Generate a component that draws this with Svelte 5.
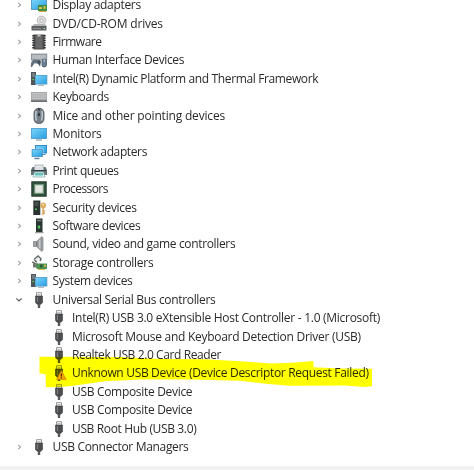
<script>
  const devices = [
    { icon: "display", label: "Display adapters", spacing: -0.31 },
    { icon: "disc", label: "DVD/CD-ROM drives", spacing: -0.18 },
    { icon: "firmware", label: "Firmware", spacing: -0.48 },
    { icon: "hid", label: "Human Interface Devices", spacing: -0.37 },
    { icon: "system", label: "Intel(R) Dynamic Platform and Thermal Framework", spacing: -0.37 },
    { icon: "keyboard", label: "Keyboards", spacing: -0.33 },
    { icon: "mouse", label: "Mice and other pointing devices", spacing: -0.18 },
    { icon: "monitor", label: "Monitors", spacing: -0.17 },
    { icon: "network", label: "Network adapters", spacing: -0.38 },
    { icon: "printer", label: "Print queues", spacing: -0.42 },
    { icon: "cpu", label: "Processors", spacing: -0.58 },
    { icon: "security", label: "Security devices", spacing: -0.31 },
    { icon: "software", label: "Software devices", spacing: -0.4 },
    { icon: "sound", label: "Sound, video and game controllers", spacing: -0.35 },
    { icon: "storage", label: "Storage controllers", spacing: -0.28 },
    { icon: "system", label: "System devices", spacing: -0.35 },
    { icon: "usb", label: "Universal Serial Bus controllers", open: true, spacing: -0.33 },
    { icon: "usb", label: "Intel(R) USB 3.0 eXtensible Host Controller - 1.0 (Microsoft)", child: true, spacing: -0.28 },
    { icon: "usb", label: "Microsoft Mouse and Keyboard Detection Driver (USB)", child: true, spacing: -0.28 },
    { icon: "usb", label: "Realtek USB 2.0 Card Reader", child: true, spacing: -0.4 },
    { icon: "usb", label: "Unknown USB Device (Device Descriptor Request Failed)", child: true, warning: true, spacing: -0.32 },
    { icon: "usb", label: "USB Composite Device", child: true, spacing: -0.31 },
    { icon: "usb", label: "USB Composite Device", child: true, spacing: -0.31 },
    { icon: "usb", label: "USB Root Hub (USB 3.0)", child: true, spacing: -0.36 },
    { icon: "usb", label: "USB Connector Managers", spacing: -0.32 },
  ];
</script>

<div class="window">
  <svg class="defs" width="0" height="0">
    <defs>
      <linearGradient id="screen" x1="0" y1="0" x2="1" y2="1">
        <stop offset="0" stop-color="#78d4fb" />
        <stop offset="1" stop-color="#2b9fe0" />
      </linearGradient>
    </defs>
  </svg>

  <div class="tree">
    {#each devices as { icon, label, child, open, warning, spacing }}
      <div class="row" class:child>
        <span class="toggle">
          {#if open}
            <svg width="8" height="8" viewBox="0 0 8 8"><path d="M1.4 2.5 4 5l2.6-2.5" fill="none" stroke="#606060" stroke-width="1.1" /></svg>
          {:else if !child}
            <svg width="8" height="8" viewBox="0 0 8 8"><path d="M3.2 1.8 5.6 4 3.2 6.2" fill="none" stroke="#a2a2a2" stroke-width="1.1" /></svg>
          {/if}
        </span>
        <svg class="icon" width="18" height="18" viewBox="0 0 18 18">
          {#if icon === "display"}
            <rect x="1" y="3" width="16" height="11" fill="#5b9dc8" />
            <rect x="2" y="4" width="14" height="9" fill="url(#screen)" />
            <rect x="8" y="9" width="9" height="6" fill="#3c8f3f" />
            <path d="M9 11h3v2H9zM13.5 10h2v3h-2z" fill="#d9bc53" />
            <path d="M9 15.4h7" stroke="#c99d39" />
          {:else if icon === "disc"}
            <circle cx="11.5" cy="5.5" r="4.4" fill="#dcdcdc" stroke="#b3b5b4" stroke-width=".8" />
            <circle cx="11.5" cy="5.5" r="1.5" fill="#fff" stroke="#999" stroke-width=".7" />
            <path d="M4 9h11l2 2.5H1.5z" fill="#b5b5b5" />
            <rect x="1.5" y="11" width="15" height="4.5" rx=".5" fill="#5d5f60" />
            <path d="M3 13.5h8" stroke="#989b9b" stroke-width=".8" />
            <path d="M13.5 13.5h1.5" stroke="#b5ecb0" />
          {:else if icon === "firmware"}
            <rect x="3.5" y="1.5" width="11" height="15" fill="#4a4a4a" />
            <path d="M3.2 2v14M14.8 2v14" stroke="#292929" stroke-width="1.8" stroke-dasharray="1.4 1" />
            <rect x="5.5" y="2.5" width="7" height="13" fill="#68696a" />
            <path d="M7.5 1.5h3v2h-3z" fill="#c4c4c4" />
          {:else if icon === "hid"}
            <rect x="1.3" y="3" width="15.5" height="6" fill="#a8afb4" stroke="#737c84" stroke-width=".7" />
            <path d="M2.5 5h13M2.5 7h13" stroke="#e2e5e7" stroke-width=".7" stroke-dasharray="1.3 .7" />
            <path d="M2.5 9.5Q5 7.5 8 9.5l1 4-2-1-2.5-.2L2 16H.8L1 12z" fill="#64717c" />
            <path d="M7 9.5q3-1.5 4 1l-1 5-2-3z" fill="#40515e" />
            <rect x="12" y="8" width="4.5" height="8" rx="2.2" fill="#6b7f93" stroke="#405163" stroke-width=".8" />
            <path d="M14.2 8v3" stroke="#dfe8ed" stroke-width=".7" />
          {:else if icon === "system"}
            <rect x="1" y="2" width="5" height="13" fill="#4b555b" />
            <path d="M2 4h3M2 6h3" stroke="#aeb9bd" stroke-width=".8" />
            <circle cx="3.2" cy="9.5" r=".8" fill="#6ede62" />
            <rect x="5" y="5" width="12.3" height="9.5" fill="#5b9dc8" />
            <rect x="5.8" y="5.8" width="10.7" height="7.9" fill="url(#screen)" />
            <path d="M8 15.2h6" stroke="#8ba0af" stroke-width="1" />
          {:else if icon === "keyboard"}
            <rect x="1" y="4" width="16" height="10" fill="#a6a8aa" />
            <path d="M2 5.8h14M2 8h14M2 10.2h14" stroke="#dadcdd" stroke-width="1" stroke-dasharray="1.4 .4" />
            <path d="M1 13.2h16" stroke="#6b6e71" stroke-width="1.6" />
          {:else if icon === "mouse"}
            <rect x="4" y="1.3" width="10" height="15.2" rx="4.6" fill="#767f88" stroke="#4a5158" stroke-width=".8" />
            <path d="M6 4q-1 5 .4 9.5M12 4q1 5-.4 9.5" fill="none" stroke="#c0c8ce" stroke-width="1.5" />
            <path d="M9 1.5V9" stroke="#252c33" stroke-width="1.7" />
            <path d="M9 3.2v3" stroke="#ccd1d4" stroke-width=".8" />
          {:else if icon === "monitor"}
            <rect x="1" y="3" width="16" height="11" fill="#5b9dc8" />
            <rect x="1.8" y="3.8" width="14.4" height="9.4" fill="url(#screen)" />
            <path d="M6 15h6" stroke="#8ba0af" stroke-width="1.2" />
          {:else if icon === "network"}
            <rect x="5" y="2" width="12" height="8.5" fill="#287ebd" />
            <rect x="5.8" y="2.8" width="10.4" height="6.9" fill="url(#screen)" />
            <path d="M12.5 11.5h3" stroke="#61869d" />
            <rect x="1.5" y="6" width="11.5" height="8" fill="#287ebd" stroke="#e8f5fb" stroke-width=".5" />
            <rect x="2.4" y="6.9" width="9.7" height="6.2" fill="url(#screen)" />
            <path d="M4.5 15.5h5" stroke="#5b7f9e" stroke-width="1.4" />
          {:else if icon === "printer"}
            <path d="M5 3h8v5H5z" fill="#e9eeee" stroke="#929c9f" stroke-width=".7" />
            <path d="M2.5 5h13l1.5 3v5H1V8z" fill="#657377" />
            <path d="M4.5 5h9v3h-9z" fill="#dce2e4" />
            <path d="M1.5 8.5h15" stroke="#333e42" />
            <path d="M4.5 10h9l1.5 5H3z" fill="#e1f7f2" stroke="#7da5a7" stroke-width=".7" />
            <path d="M5 11h8v2.5H5z" fill="#65bfc0" />
          {:else if icon === "cpu"}
            <rect x="1.8" y="1.8" width="14.4" height="14.4" fill="#31503d" stroke="#263f30" />
            <rect x="4" y="4" width="10" height="10" fill="#6e9278" />
            <rect x="5.2" y="5.2" width="7.6" height="7.6" fill="#e4e7e1" />
          {:else if icon === "security"}
            <rect x="3.3" y="1.5" width="7" height="14.5" fill="#2a3330" />
            <path d="M4.5 4h4M4.5 6h4" stroke="#77857e" stroke-width=".7" />
            <circle cx="6" cy="10.2" r=".9" fill="#54d565" />
            <circle cx="13.2" cy="6.5" r="2.9" fill="#dcae62" />
            <circle cx="13.2" cy="5.6" r=".9" fill="#fff1c2" />
            <path d="M13 9v7M13 12h2M13 14.2h2" stroke="#d3a459" stroke-width="1.4" />
          {:else if icon === "software"}
            <path d="M6 1.5h6.5V15H6z" fill="#293330" />
            <path d="M7 2.8h4.5v1.6H7z" fill="#727f7a" />
            <path d="M7.8 8.5h2.4v3H7.8z" fill="#53c564" />
            <path d="M5 15.6h8.5" stroke="#9aa09d" stroke-width="1.3" />
          {:else if icon === "sound"}
            <path d="M3.5 6.5h3l5.5-5v15l-5.5-5h-3z" fill="#a3a6a9" stroke="#77797b" stroke-width=".7" />
            <path d="M6.8 6.7v4.6" stroke="#66686a" />
            <path d="M9.8 4.8v8.4" stroke="#d0d0d0" stroke-width="1.2" />
            <path d="M12.8 2.2v13.6" stroke="#8b8e90" stroke-width="1.2" />
          {:else if icon === "storage"}
            <path d="M4 5.5 8 2l3 2.8-1 2M4 5.5l3 2.8M2.2 8l4 2" fill="none" stroke="#646965" stroke-width="1.5" />
            <circle cx="7.2" cy="5.3" r="1.2" fill="#e5e8e6" />
            <path d="M3 9.5h5v4H3z" fill="#727a73" />
            <path d="M6.5 9.5H17V15H6.5z" fill="#4b9350" />
            <path d="M10 10.5h2.6v3H10z" fill="#315d38" />
            <path d="M14 10.8h2v2h-2zM8 15h7v1H8z" fill="#d7b954" />
          {:else}
            <path d="M6.5 5V1.6h5V5" fill="#f4f4f4" stroke="#9a9a9a" stroke-width="1" />
            <path d="M8.1 3v1.2M9.9 3v1.2" stroke="#777" stroke-width=".7" />
            <path d="M5.5 5h7v6.5L11 13.2H7L5.5 11.5z" fill="#4c4e50" stroke="#3a3b3d" stroke-width=".6" />
            <path d="M7.4 6v5" stroke="#85878a" stroke-width=".9" />
            <path d="M9 13v4" stroke="#56585a" stroke-width="2.4" />
          {/if}
          {#if warning}
            <path d="M11.4 6.6 16.2 15.4H6.6z" fill="#f3a552" stroke="#d88a3e" stroke-width=".8" />
            <path d="M11.4 9.4v3M11.4 13.3v1.2" stroke="#543018" stroke-width="1.2" />
          {/if}
        </svg>
        <span class="label" style="letter-spacing: {spacing}px">{label}</span>
      </div>
    {/each}
  </div>

  <!-- marker stroke over the failed device -->
  <svg class="marker" width="474" height="470" viewBox="0 0 474 470">
    <path
      d="M39.5 356.8 L120 357 L160 359 L205 359.2 L240 361.3 L272 363.4 L292 362.8 L313.5 361 V367.2 L340 368.5 L372 368.8 V386 L366 387 L345 385.5 L290 385.7 L268 384 L240 380.8 L190 379.5 L140 379.5 L105 381.3 L75 385.6 L60 387 L46 387.3 L45.5 374 L39.5 373.4Z"
      fill="#ffff00"
    />
  </svg>
  <div class="status"></div>
</div>

<style>
  :global(body) {
    margin: 0;
    background: #fff;
  }

  .window {
    position: relative;
    display: flex;
    flex-direction: column;
    width: 474px;
    height: 470px;
    overflow: hidden;
    background: #fff;
    color: #2b2b2b;
    font-family: "Open Sans", "Noto Sans", sans-serif;
    font-size: 12px;
  }

  .defs {
    position: absolute;
  }

  .tree {
    flex: 1;
    min-height: 0;
    margin-top: -4px;
  }

  .row {
    display: flex;
    align-items: center;
    height: 18.42px;
    padding-left: 15px;
  }

  .row.child {
    padding-left: 34.5px;
  }

  .toggle {
    display: flex;
    width: 8px;
  }

  .icon {
    flex: none;
    margin-left: 7px;
  }

  .label {
    margin-left: 4.5px;
    line-height: 18px;
    white-space: pre;
  }

  .marker {
    position: absolute;
    inset: 0;
    mix-blend-mode: multiply;
    pointer-events: none;
  }

  .status {
    flex: none;
    height: 4px;
    background: #f1f1f1;
  }
</style>
